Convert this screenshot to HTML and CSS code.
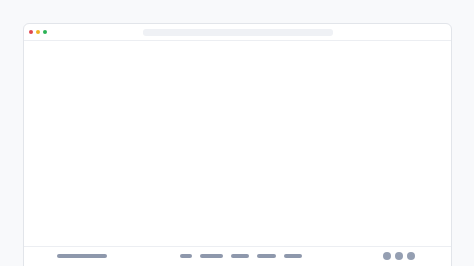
FILE: index.html
```html
<!DOCTYPE html>
<html lang="en">
<head>
<meta charset="utf-8">
<title>Browser mockup</title>
<link rel="stylesheet" href="styles.css">
</head>
<body>
  <div class="window">
    <div class="titlebar">
      <div class="dots">
        <span class="dot red"></span>
        <span class="dot yellow"></span>
        <span class="dot green"></span>
      </div>
      <div class="url"></div>
      <div></div>
    </div>
    <div class="content"></div>
    <div class="footer">
      <span class="bar brand"></span>
      <div class="links">
        <span class="bar w12"></span>
        <span class="bar w23"></span>
        <span class="bar w18"></span>
        <span class="bar w19"></span>
        <span class="bar w18"></span>
      </div>
      <div class="socials">
        <span class="circle"></span>
        <span class="circle"></span>
        <span class="circle"></span>
      </div>
    </div>
  </div>
</body>
</html>
```
FILE: styles.css
```css
html, body {
  margin: 0;
  height: 100%;
  overflow: hidden;
}
body {
  background: #f8f9fb;
  padding: 23px 22px 0 23px;
  box-sizing: border-box;
  font-family: "Inter", "Liberation Sans", sans-serif;
}
.window {
  background: #ffffff;
  border: 1px solid #e2e5ea;
  border-radius: 6px;
  overflow: hidden;
  padding-bottom: 12px;
}
.titlebar {
  height: 16px;
  display: grid;
  grid-template-columns: 1fr 190px 1fr;
  align-items: center;
  border-bottom: 1px solid #eceef2;
}
.dots {
  display: flex;
  gap: 3px;
  padding-left: 5px;
  margin-bottom: 1px;
}
.dot {
  width: 4px;
  height: 4px;
  border-radius: 50%;
}
.red { background: #e0464c; }
.yellow { background: #f0b323; }
.green { background: #2bb356; }
.url {
  height: 7px;
  border-radius: 3px;
  background: #eff1f5;
}
.content {
  height: 205px;
}
.footer {
  height: 18px;
  border-top: 1px solid #eceef2;
  display: flex;
  align-items: center;
  justify-content: space-between;
  padding: 0 36px 0 33px;
}
.bar {
  display: block;
  height: 4px;
  border-radius: 2px;
  background: #8e98ac;
}
.brand { width: 50px; }
.links {
  display: flex;
  gap: 8px;
  margin-right: 8px;
}
.w12 { width: 12px; }
.w23 { width: 23px; }
.w18 { width: 18px; }
.w19 { width: 19px; }
.socials {
  display: flex;
  gap: 4px;
}
.circle {
  width: 8px;
  height: 8px;
  border-radius: 50%;
  background: #959fb2;
}
```
